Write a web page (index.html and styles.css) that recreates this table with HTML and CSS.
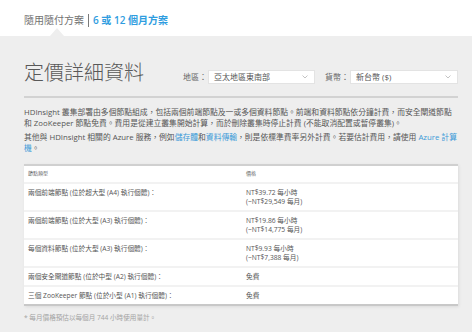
FILE: index.html
```html
<!DOCTYPE html>
<html lang="zh-Hant">
<head>
  <meta charset="UTF-8">
  <meta name="viewport" content="width=device-width, initial-scale=1.0">
  <title>HDInsight 定價詳細資料</title>
  <link rel="stylesheet" href="styles.css">
</head>
<body>
  <div class="plan-tabs">
    <span class="tab">隨用隨付方案</span>
    <span class="tab-divider"></span>
    <a class="tab tab-link" href="#">6 或 12 個月方案</a>
  </div>
  <div class="tab-pointer"></div>

  <div class="pricing-panel">
    <div class="pricing-head">
      <h1>定價詳細資料</h1>
      <div class="filters">
        <span class="filter-label">地區：</span>
        <div class="select select-region">
          <span>亞太地區東南部</span>
          <svg width="6" height="4" viewBox="0 0 6 4"><polyline points="0.5,0.5 3,3 5.5,0.5" fill="none" stroke="#c4c4c4" stroke-width="1"/></svg>
        </div>
        <span class="filter-label">貨幣：</span>
        <div class="select select-currency">
          <span>新台幣 ($)</span>
          <svg width="6" height="4" viewBox="0 0 6 4"><polyline points="0.5,0.5 3,3 5.5,0.5" fill="none" stroke="#c4c4c4" stroke-width="1"/></svg>
        </div>
      </div>
    </div>

    <div class="intro">
      <p>HDInsight 叢集部署由多個節點組成，包括兩個前端節點及一或多個資料節點。前端和資料節點依分鐘計費，而安全閘道節點<br>和 ZooKeeper 節點免費。費用是從建立叢集開始計算，而於刪除叢集時停止計費 (不能取消配置或暫停叢集)。</p>
      <p>其他與 HDInsight 相關的 Azure 服務，例如<a href="#">儲存體</a>和<a href="#">資料傳輸</a>，則是依標準費率另外計費。若要估計費用，請使用 <a href="#">Azure 計算<br>機</a>。</p>
    </div>

    <div class="price-table">
      <div class="price-row price-row-head">
        <div>節點類型</div>
        <div>價格</div>
      </div>
      <div class="price-row">
        <div>兩個前端節點 (位於超大型 (A4) 執行個體)：</div>
        <div>NT$39.72 每小時<br>(~NT$29,549 每月)</div>
      </div>
      <div class="price-row">
        <div>兩個前端節點 (位於大型 (A3) 執行個體)：</div>
        <div>NT$19.86 每小時<br>(~NT$14,775 每月)</div>
      </div>
      <div class="price-row">
        <div>每個資料節點 (位於大型 (A3) 執行個體)：</div>
        <div>NT$9.93 每小時<br>(~NT$7,388 每月)</div>
      </div>
      <div class="price-row">
        <div>兩個安全閘道節點 (位於中型 (A2) 執行個體)：</div>
        <div>免費</div>
      </div>
      <div class="price-row">
        <div>三個 ZooKeeper 節點 (位於小型 (A1) 執行個體)：</div>
        <div>免費</div>
      </div>
    </div>

    <p class="footnote">* 每月價格預估以每個月 744 小時使用量計。</p>
  </div>
</body>
</html>
```

FILE: styles.css
```css
:root {
  --panel-bg: #eeeeee;
  --text-color: #555555;
  --link-color: #3b9ad8;
  --rule-color: #d2d2d2;
}

* {
  box-sizing: border-box;
}

body {
  margin: 0;
  background-color: #ffffff;
  color: var(--text-color);
  font-family: "Open Sans", "Noto Sans CJK TC", sans-serif;
}

a {
  color: var(--link-color);
  text-decoration: none;
}

/* plan switcher */
.plan-tabs {
  display: flex;
  align-items: center;
  height: 27px;
  padding: 13px 24px 0;
  font-size: 10px;
  line-height: 14px;
}

.tab {
  color: #727272;
}

.tab-link {
  color: #2f9de0;
  font-weight: 600;
}

.tab-divider {
  width: 1px;
  height: 13px;
  margin: 0 4px;
  background-color: #7a7a7a;
}

.tab-pointer {
  width: 0;
  height: 0;
  margin: 1px 0 0 50px;
  border-left: 7px solid transparent;
  border-right: 7px solid transparent;
  border-bottom: 8px solid var(--panel-bg);
}

/* grey panel */
.pricing-panel {
  height: 296px;
  margin-right: 2px;
  padding: 24px 14px 0 24px;
  background-color: var(--panel-bg);
}

.pricing-head {
  display: flex;
  justify-content: space-between;
  align-items: flex-end;
  padding-bottom: 10px;
  border-bottom: 2px solid var(--rule-color);
}

h1 {
  margin: 0;
  font-size: 20px;
  line-height: 26px;
  font-weight: 300;
  color: #585858;
}

.filters {
  display: flex;
  align-items: center;
  margin-bottom: 2px;
  font-size: 8px;
  line-height: 14px;
}

.filter-label {
  margin-right: 1px;
  color: #666;
}

.select {
  display: flex;
  justify-content: space-between;
  align-items: center;
  height: 14px;
  padding: 0 6px 0 5px;
  background-color: #ffffff;
  border: 1px solid #e3e3e3;
  color: #555;
}

.select-region {
  width: 107px;
  margin-right: 10px;
}

.select-currency {
  width: 108px;
}

.intro {
  padding: 9px 0 10px;
}

.intro p {
  margin: 0;
  font-size: 7.8px;
  line-height: 11px;
  white-space: nowrap;
}

.intro p + p {
  margin-top: 3px;
}

/* table */
.price-table {
  display: flex;
  flex-direction: column;
  gap: 2px;
  background-color: #f2f2f2;
  border-top: 2px solid #d0d0d0;
  border-bottom: 2px solid #c8c8c8;
  box-shadow: 1px 1px 3px rgba(0,0,0,0.08);
}

.price-row {
  display: grid;
  grid-template-columns: 218px 1fr;
  padding: 4px;
  background-color: #ffffff;
  font-size: 6.7px;
  line-height: 9px;
  color: #555;
}

.price-row-head {
  padding: 3px 4px 4px;
  font-size: 5px;
  color: #666;
}

.footnote {
  margin: 7px 0 0;
  font-size: 6.6px;
  line-height: 9px;
  color: #a3a3a3;
}
```
